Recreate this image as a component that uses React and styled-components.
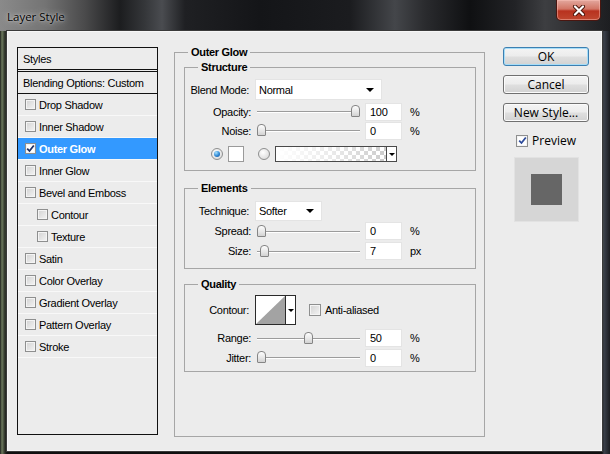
import React from 'react';
import styled, { createGlobalStyle } from 'styled-components';

const GlobalStyle = createGlobalStyle`
  html, body {
    margin: 0;
    padding: 0;
    background: #151515;
  }
  body {
    font-family: "Liberation Sans", Arial, sans-serif;
    font-size: 11px;
    letter-spacing: -0.3px;
    color: #000;
  }
  * { box-sizing: border-box; }
`;

const Window = styled.div`
  width: 610px;
  height: 454px;
  display: flex;
  flex-direction: column;
  overflow: hidden;
  background:
    linear-gradient(90deg, #1d1f1c 0px, #6d7a5e 2px, #2a2e26 5px, rgba(0,0,0,0) 7px, rgba(0,0,0,0) 602px, #3b404a 604px, #1b1d21 610px),
    linear-gradient(180deg, #2b2c2e 0%, #3a4034 35%, #4b5642 55%, #22241f 80%, #101010 100%);
`;

const TitleBar = styled.div`
  height: 31px;
  flex-shrink: 0;
  display: flex;
  align-items: flex-start;
  justify-content: space-between;
  background: linear-gradient(90deg,
    #8a8a8a 0px, #747474 45px, #4a4a4b 85px, #1c1d1f 120px, #35373a 145px,
    #4a4c50 162px, #1f2023 185px, #141518 260px, #1b1c1f 350px, #44464a 395px,
    #2a2b2e 425px, #0f1012 470px, #222326 515px, #3d3e41 545px, #1d1e21 610px);
`;

const Title = styled.span`
  margin: 9px 0 0 7px;
  font-family: "Open Sans", "Noto Sans", sans-serif;
  font-size: 11.5px;
  letter-spacing: 0;
  color: #000;
  text-shadow: 0 0 6px rgba(230, 230, 230, 0.9), 0 0 2px rgba(255, 255, 255, 0.6);
`;

const CloseButton = styled.div`
  width: 45px;
  height: 21px;
  margin-right: 9px;
  display: flex;
  align-items: center;
  justify-content: center;
  border: 1px solid #4a1610;
  border-top: none;
  border-radius: 0 0 5px 5px;
  background: linear-gradient(180deg, #e3a89e 0%, #d27565 45%, #b8321f 55%, #c0472f 100%);
  box-shadow: inset 0 0 0 1px rgba(255, 200, 190, 0.45);
`;

const Client = styled.div`
  flex: 1;
  margin: 0 8px 5px 7px;
  display: flex;
  align-items: flex-start;
  padding: 15px 12px 13px 9px;
  background: #ececec;
  border: 1px solid #f6f6f6;
  box-shadow: 0 0 0 1px #3a3a3a;
`;

const StyleList = styled.div`
  width: 141px;
  height: 388px;
  flex-shrink: 0;
  border: 1px solid #111;
  background: #ececec;
`;

const ListHeader = styled.div`
  height: 22px;
  display: flex;
  align-items: center;
  padding-left: 5px;
  border-bottom: 1px solid #111;
  margin-bottom: 1px;
`;

const BlendingRow = styled.div`
  height: 23px;
  display: flex;
  align-items: center;
  padding-left: 5px;
  border-top: 1px solid #111;
  border-bottom: 1px solid #111;
`;

const ListItem = styled.div`
  height: 22px;
  display: flex;
  align-items: center;
  gap: 3px;
  padding-left: ${(p) => (p.$indent ? 19 : 7)}px;
  border-bottom: 1px solid #f8f8f8;
  background: ${(p) => (p.$selected ? '#3399ff' : 'transparent')};
  color: ${(p) => (p.$selected ? '#fff' : '#000')};
  font-weight: ${(p) => (p.$selected ? 'bold' : 'normal')};
`;

const Box = styled.span`
  width: ${(p) => p.$size || 12}px;
  height: ${(p) => p.$size || 12}px;
  flex-shrink: 0;
  display: inline-flex;
  align-items: center;
  justify-content: center;
  border: 1px solid #8e8f8f;
  background: ${(p) => (p.$checked ? '#fff' : 'linear-gradient(135deg, #d2d2d2 0%, #f4f4f4 100%)')};
  box-shadow: inset 0 0 0 1px #f4f4f4;
`;

const MainGroup = styled.fieldset`
  width: 311px;
  height: 392px;
  margin: -2px 0 0 16px;
  padding: 0;
  border: 1px solid #a6a6a6;
  flex-shrink: 0;
  min-inline-size: 0;
`;

const Legend = styled.legend`
  margin-left: 13px;
  padding: 0 3px;
  font-weight: bold;
  line-height: 14px;
  height: 14px;
`;

const Section = styled.fieldset`
  margin: ${(p) => p.$top}px 8px 0 9px;
  padding: ${(p) => p.$padTop}px 0 ${(p) => p.$padBottom}px 0;
  border: 1px solid #a6a6a6;
  min-inline-size: 0;
`;

const Row = styled.div`
  height: ${(p) => p.$h}px;
  margin-top: ${(p) => p.$mt || 0}px;
  display: flex;
  align-items: center;
`;

const Label = styled.span`
  width: 66px;
  padding-right: ${(p) => (p.$slider ? 0 : 2)}px;
  margin-right: 4px;
  text-align: right;
  white-space: nowrap;
  flex-shrink: 0;
`;

const Dropdown = styled.div`
  width: ${(p) => p.$w}px;
  height: ${(p) => p.$h || 21}px;
  display: flex;
  align-items: center;
  justify-content: space-between;
  padding: 0 7px 0 3px;
  background: #fff;
  border: 1px solid #e4e4e4;
`;

const Caret = styled.span`
  width: 0;
  height: 0;
  border-left: 4px solid transparent;
  border-right: 4px solid transparent;
  border-top: 4px solid #000;
`;

const Track = styled.div`
  position: relative;
  width: 103px;
  height: 19px;
  margin-left: 2px;
  flex-shrink: 0;
  &::before {
    content: '';
    position: absolute;
    left: 0;
    right: 0;
    top: 9px;
    height: 1px;
    background: #9c9c9c;
    box-shadow: 0 1px 0 #fff;
  }
`;

const Thumb = styled.span`
  position: absolute;
  top: 3px;
  width: 9px;
  height: 12px;
  border: 1px solid #858585;
  border-radius: 4px 4px 1px 1px;
  background: linear-gradient(180deg, #fdfdfd 0%, #e6e6e6 60%, #d2d2d2 100%);
`;

const NumberBox = styled.div`
  width: 37px;
  height: 18px;
  margin-left: 5px;
  padding-left: 4px;
  display: flex;
  align-items: center;
  background: #fff;
  border: 1px solid #e4e4e4;
  flex-shrink: 0;
`;

const Unit = styled.span`
  margin-left: 8px;
`;

const ColorRow = styled.div`
  height: 16px;
  margin-top: 6px;
  padding-left: 26px;
  display: flex;
  align-items: center;
`;

const Radio = styled.span`
  width: 12px;
  height: 12px;
  border-radius: 50%;
  border: 1px solid #8e8f8f;
  background: radial-gradient(circle at 40% 35%, #ffffff 0%, #e0e0e0 70%, #cfcfcf 100%);
  display: inline-flex;
  align-items: center;
  justify-content: center;
  margin-right: ${(p) => p.$mr}px;
  flex-shrink: 0;
  &::after {
    content: '';
    display: ${(p) => (p.$on ? 'block' : 'none')};
    width: 6px;
    height: 6px;
    border-radius: 50%;
    background: radial-gradient(circle at 35% 30%, #a6e2ff 0%, #2f87d4 55%, #174f91 100%);
  }
`;

const ColorSwatch = styled.span`
  width: 16px;
  height: 16px;
  margin-right: 14px;
  background: #fff;
  border: 1px solid #9a9a9a;
  flex-shrink: 0;
`;

const GradientSwatch = styled.div`
  width: 122px;
  height: 16px;
  display: flex;
  border: 1px solid #4a4a4a;
  flex-shrink: 0;
`;

const GradientFill = styled.span`
  flex: 1;
  background:
    linear-gradient(90deg, #fff 0%, rgba(255, 255, 255, 0.6) 50%, rgba(255, 255, 255, 0) 100%),
    conic-gradient(#cccccc 25%, #ffffff 0 50%, #cccccc 0 75%, #ffffff 0) 0 0 / 8px 8px;
`;

const ArrowCell = styled.span`
  width: 10px;
  display: flex;
  align-items: center;
  justify-content: center;
  background: #fff;
  border-left: 1px solid ${(p) => p.$line || '#4a4a4a'};
`;

const SmallCaret = styled.span`
  width: 0;
  height: 0;
  border-left: 3px solid transparent;
  border-right: 3px solid transparent;
  border-top: 3px solid #000;
`;

const ContourSwatch = styled.div`
  width: 41px;
  height: 30px;
  display: flex;
  border: 1px solid #2a2a2a;
  background: #fff;
  margin-right: 13px;
  flex-shrink: 0;
`;

const CheckLabel = styled.label`
  display: flex;
  align-items: center;
  gap: 4px;
  margin-top: ${(p) => p.$mt || 0}px;
  font-size: ${(p) => p.$fs || 11}px;
  font-family: ${(p) => (p.$ui ? '"Open Sans", "Noto Sans", sans-serif' : 'inherit')};
  letter-spacing: ${(p) => (p.$ui ? 0 : -0.3)}px;
`;

const SideColumn = styled.div`
  width: 86px;
  margin-left: 18px;
  flex-shrink: 0;
  display: flex;
  flex-direction: column;
  align-items: center;
`;

const Button = styled.div`
  width: 86px;
  height: 19px;
  margin-bottom: 9px;
  display: flex;
  align-items: center;
  justify-content: center;
  font-family: "Open Sans", "Noto Sans", sans-serif;
  font-size: 12px;
  letter-spacing: 0;
  color: #000;
  border: 1px solid ${(p) => (p.$default ? '#3c7fb1' : '#707070')};
  border-radius: 3px;
  background: linear-gradient(180deg, #f4f4f4 0%, #ececec 48%, #dfdfdf 52%, #d2d2d2 100%);
  box-shadow: inset 0 0 0 1px ${(p) => (p.$default ? '#a6ddf8' : '#fbfbfb')};
`;

const PreviewBox = styled.div`
  width: 65px;
  height: 65px;
  margin-top: 8px;
  display: flex;
  align-items: center;
  justify-content: center;
  background: #d6d6d6;
  border: 1px solid #e2e2e2;
`;

const PreviewShape = styled.div`
  width: 31px;
  height: 31px;
  background: #666;
`;

const Check = ({ color = '#1f2f63' }) => (
  <svg width="9" height="9" viewBox="0 0 9 9">
    <path d="M1.2 4.6 L3.5 7 L7.8 1.5" fill="none" stroke={color} strokeWidth="1.8" />
  </svg>
);

const Slider = ({ value }) => (
  <Track>
    <Thumb style={{ left: `${Math.round(value * 94)}px` }} />
  </Track>
);

const SliderRow = ({ label, value, text, unit, h = 19, mt }) => (
  <Row $h={h} $mt={mt}>
    <Label $slider>{label}</Label>
    <Slider value={value} />
    <NumberBox>{text}</NumberBox>
    <Unit>{unit}</Unit>
  </Row>
);

const items = [
  { name: 'Drop Shadow' },
  { name: 'Inner Shadow' },
  { name: 'Outer Glow', selected: true },
  { name: 'Inner Glow' },
  { name: 'Bevel and Emboss' },
  { name: 'Contour', indent: true },
  { name: 'Texture', indent: true },
  { name: 'Satin' },
  { name: 'Color Overlay' },
  { name: 'Gradient Overlay' },
  { name: 'Pattern Overlay' },
  { name: 'Stroke' },
];

export default function App() {
  return (
    <>
      <GlobalStyle />
      <Window>
        <TitleBar>
          <Title>Layer Style</Title>
          <CloseButton>
            <svg width="14" height="11" viewBox="0 0 14 11">
              <path d="M3 1.5 L11 9.5 M11 1.5 L3 9.5" stroke="#4a1208" strokeWidth="4" strokeLinecap="round" />
              <path d="M3 1.5 L11 9.5 M11 1.5 L3 9.5" stroke="#fff" strokeWidth="2.2" strokeLinecap="round" />
            </svg>
          </CloseButton>
        </TitleBar>
        <Client>
          <StyleList>
            <ListHeader>Styles</ListHeader>
            <BlendingRow>Blending Options: Custom</BlendingRow>
            {items.map((it) => (
              <ListItem key={it.name} $selected={it.selected} $indent={it.indent}>
                <Box $size={11} $checked={it.selected}>
                  {it.selected && <Check />}
                </Box>
                {it.name}
              </ListItem>
            ))}
          </StyleList>

          <MainGroup>
            <Legend>Outer Glow</Legend>
            <Section $top={1} $padTop={5} $padBottom={8}>
              <Legend>Structure</Legend>
              <Row $h={21}>
                <Label>Blend Mode:</Label>
                <Dropdown $w={127}>
                  Normal
                  <Caret />
                </Dropdown>
              </Row>
              <SliderRow label="Opacity:" value={1} text="100" unit="%" mt={2} />
              <SliderRow label="Noise:" value={0} text="0" unit="%" />
              <ColorRow>
                <Radio $on $mr={5} />
                <ColorSwatch />
                <Radio $mr={5} />
                <GradientSwatch>
                  <GradientFill />
                  <ArrowCell>
                    <SmallCaret />
                  </ArrowCell>
                </GradientSwatch>
              </ColorRow>
            </Section>

            <Section $top={10} $padTop={6} $padBottom={7}>
              <Legend>Elements</Legend>
              <Row $h={20}>
                <Label>Technique:</Label>
                <Dropdown $w={67} $h={20}>
                  Softer
                  <Caret />
                </Dropdown>
              </Row>
              <SliderRow label="Spread:" value={0} text="0" unit="%" h={20} />
              <SliderRow label="Size:" value={7 / 250} text="7" unit="px" h={20} />
            </Section>

            <Section $top={8} $padTop={4} $padBottom={4}>
              <Legend>Quality</Legend>
              <Row $h={30}>
                <Label>Contour:</Label>
                <ContourSwatch>
                  <svg width="29" height="28" viewBox="0 0 29 28">
                    <polygon points="0,28 29,0 29,28" fill="#a3a3a3" />
                  </svg>
                  <ArrowCell $line="#2a2a2a">
                    <SmallCaret />
                  </ArrowCell>
                </ContourSwatch>
                <CheckLabel>
                  <Box $size={12} />
                  Anti-aliased
                </CheckLabel>
              </Row>
              <SliderRow label="Range:" value={0.5} text="50" unit="%" h={20} mt={3} />
              <SliderRow label="Jitter:" value={0} text="0" unit="%" />
            </Section>
          </MainGroup>

          <SideColumn>
            <Button $default>OK</Button>
            <Button>Cancel</Button>
            <Button>New Style...</Button>
            <CheckLabel $ui $fs={12} $mt={1}>
              <Box $size={12} $checked>
                <Check color="#2c4a9a" />
              </Box>
              Preview
            </CheckLabel>
            <PreviewBox>
              <PreviewShape />
            </PreviewBox>
          </SideColumn>
        </Client>
      </Window>
    </>
  );
}
